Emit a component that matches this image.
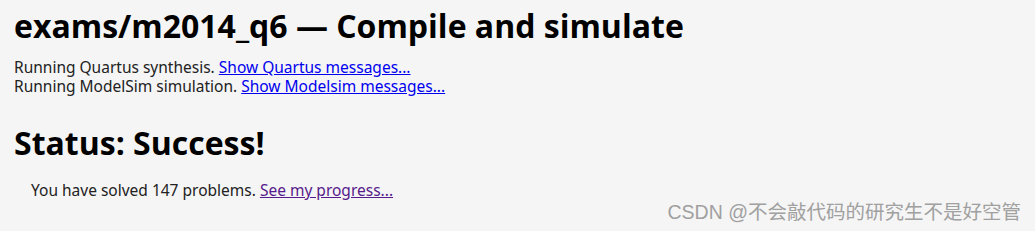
export default function App() {
  return (
    <div className="relative h-[231px] w-[1035px] overflow-hidden bg-[#f5f5f5] px-[14px] text-black">
      <h1 className="pt-[6px] font-['Open_Sans',sans-serif] text-[32px] font-bold leading-[40px]">
        exams/m2014_q6 — Compile and simulate
      </h1>
      <div className="mt-[12px] font-['Noto_Sans',sans-serif] text-[15.5px] leading-[19px] text-[#222]">
        <div>
          Running Quartus synthesis.{' '}
          <a href="#" className="text-[#0000ee] underline">Show Quartus messages...</a>
        </div>
        <div>
          Running ModelSim simulation.{' '}
          <a href="#" className="text-[#0000ee] underline">Show Modelsim messages...</a>
        </div>
      </div>
      <h2 className="mt-[27px] font-['Open_Sans',sans-serif] text-[32px] font-bold leading-[40px]">
        Status: Success!
      </h2>
      <p className="mt-[18px] pl-[17px] font-['Noto_Sans',sans-serif] text-[15.5px] leading-[19px] text-[#222]">
        You have solved 147 problems.{' '}
        <a href="#" className="text-[#551a8b] underline">See my progress...</a>
      </p>
      <div className="absolute right-[14px] top-[199px] font-['Liberation_Sans','Noto_Sans_CJK_SC',sans-serif] text-[19.5px] leading-[26px] text-[#a0a0a0]">
        CSDN @不会敲代码的研究生不是好空管
      </div>
    </div>
  );
}
